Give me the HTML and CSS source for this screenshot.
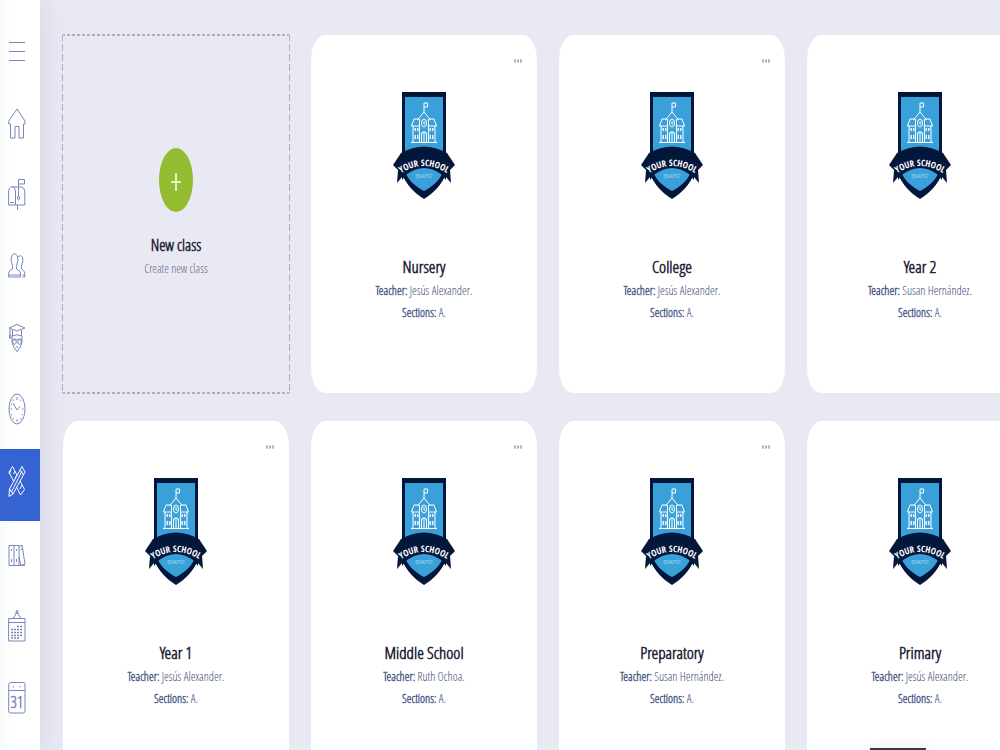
FILE: index.html
```html
<!DOCTYPE html>
<html lang="en">

<head>
  <meta charset="UTF-8">
  <meta name="viewport" content="width=device-width, initial-scale=1.0">
  <title>Classes</title>
  <link rel="stylesheet" href="styles.css">
</head>

<body>
  <svg class="sprite" aria-hidden="true">
    <defs><path id="arc" fill="none" d="M4 84Q31 64 58 84" /></defs>
    <symbol id="logo" viewBox="0 0 62 107">
      <path fill="#03173a" d="M9 0H53V82C49 92 41 101 31 107C21 101 13 92 9 82Z" />
      <path fill="#3aa0da" d="M12 5H50V80C46 89 39 95 31 99C23 95 16 89 12 80Z" />
      <g fill="none" stroke="#fff" stroke-width="1">
        <path d="M31 20V11H34.500V15H31M24.500 28L31 20L37.500 28M26.500 27V50M35.500 27V50M26 27H21L18.500 34H26M36 27H41L43.500 34H36M20 34V50M42 34V50M18 50.500H44M28.500 50V41H33.500V50M31 42V50M29 40H33" />
        <ellipse cx="31" cy="31" rx="2.500" ry="4" />
        <path d="M31 29V32H32" />
      </g>
      <path fill="#eaf6fd" d="M21.500 36H23V39H21.500ZM24 36H25.500V39H24ZM21.500 43H23V47H21.500ZM24 43H25.500V47H24ZM36.500 36H38V39H36.500ZM39 36H40.500V39H39ZM36.500 43H38V47H36.500ZM39 43H40.500V47H39Z" />
      <path fill="#03173a" d="M8 61Q31 48 54 61L62 73L57 78L58 91L53 85V88L48 82Q31 70 14 82L9 88V85L4 91L5 78L0 73Z" />
    </symbol>
  </svg>

  <nav class="sidebar">
    <button type="button" class="nav-item" aria-label="Menu">
      <svg class="icon" viewBox="0 0 18 40"><path d="M1 9.500H17M1 18.500H17M1 27.500H17" /></svg>
    </button>
    <a class="nav-item" href="#home" aria-label="Home">
      <svg class="icon" viewBox="0 0 18 40"><path d="M2.500 19H.8V16L9 4L17 16V19H15.500V33H11V21.500H7V33H2.500Z" /></svg>
    </a>
    <a class="nav-item" href="#mail" aria-label="Mailbox">
      <svg class="icon" viewBox="0 0 18 40"><path d="M10.500 20V2.500H16.500V7H10.500M.6 28V15C.6 8 7.500 8 7.500 15V28M4 10H14Q16.800 11 16.800 15V28H.6M9.500 28V33M2 25.500H6" /><ellipse cx="10.500" cy="21" rx="1" ry="2" /></svg>
    </a>
    <a class="nav-item" href="#users" aria-label="Users">
      <svg class="icon" viewBox="0 0 18 40"><path d="M.6 28V24Q1 21.500 4.500 20Q5 18 4 15Q2.500 11 3.500 7Q6.500 2.500 9.500 7Q10.500 11 9 15Q8 18 8.500 20Q12 21.500 12.500 24V28ZM.6 26H12.500M10 8Q12.500 5 14.500 8Q15.500 12 14 15Q13 17 13.500 20Q16.500 21.500 16.800 24V28H14.500M14.500 26H16.800" /></svg>
    </a>
    <a class="nav-item" href="#students" aria-label="Students">
      <svg class="icon" viewBox="0 0 18 40"><path d="M1 7L9 3.500L17 7L9 10ZM4.500 9V15Q9 12.500 13.500 15V9M2 8V15M1.500 14V17H3V14M4 15V21Q5 27 9 30.500Q13 27 14 21V15M4 19Q6 16.500 9 19Q12 16.500 14 19" /><ellipse cx="6.500" cy="21" rx="1.800" ry="2.300" /><ellipse cx="11.500" cy="21" rx="1.800" ry="2.300" /><path d="M7.500 26H10.500" /></svg>
    </a>
    <a class="nav-item" href="#schedule" aria-label="Schedule">
      <svg class="icon" viewBox="0 0 18 40"><ellipse cx="9" cy="16" rx="8" ry="15" /><path d="M5 10L9 17L12 13.500M9 4V7M9 26V29M2.500 16H4M14 16H15.500M5 6.500V8M13 6.500V8M3.500 11V12M14.500 21V22M3.500 21V22M5 25V26.500M13 25V26.500" /></svg>
    </a>
    <a class="nav-item active" href="#classes" aria-label="Classes">
      <svg class="icon" viewBox="0 0 18 40"><path d="M4.500 1.500L1 7L12.500 30L16.500 24.500ZM3 5L1 9M7 6L5.500 9M9 10L7 13M14 20L12 24" /><path class="front" d="M14 1.500L17 7L5 29L1 31.500L1.500 24ZM12 4.500L15.500 10M14 6L3.500 27M1.500 24L5 29" /></svg>
    </a>
    <a class="nav-item" href="#library" aria-label="Library">
      <svg class="icon" viewBox="0 0 18 40"><path d="M1 8.500H11V28.500H1ZM6 8.500V28.500M11 10L14 8L17 27L13 28.500L11 20M11 28.500H17M3.500 12V14M8.500 12V14M3.500 22V25M8.500 22V25M12.500 13L14 12" /></svg>
    </a>
    <a class="nav-item" href="#attendance" aria-label="Attendance">
      <svg class="icon" viewBox="0 0 18 40"><path d="M.6 9.500H17V32H.6ZM.6 13.500H17M5.500 9L9 3L12.500 9" /><ellipse cx="9" cy="3" rx="1" ry="1.800" /><path stroke-dasharray="2 1" stroke-width="1.300" d="M9 17.500H15M3 20.500H15M3 23.500H15M3 26.500H15M3 29H12" /></svg>
    </a>
    <a class="nav-item" href="#calendar" aria-label="Calendar">
      <svg class="icon" viewBox="0 0 18 40"><rect x=".7" y="1.500" width="16.300" height="30.500" rx="1.800" /><path d="M.7 9.500H17M5.500 5V6.500M12 5V6.500" /><text class="icon-day" x="9" y="27">31</text></svg>
    </a>
  </nav>

  <main class="content">
    <button type="button" class="new-class">
      <span class="plus"><svg viewBox="0 0 10 18"><path d="M5 0V18M0 9H10" /></svg></span>
      <span class="new-title">New class</span>
      <span class="new-text">Create new class</span>
    </button>

    <article class="card">
      <button type="button" class="more" aria-label="Options"><i></i><i></i><i></i></button>
      <svg class="logo" viewBox="0 0 62 107">
        <use href="#logo" />
        <text class="logo-name"><textPath href="#arc" startOffset="50%">YOUR SCHOOL</textPath></text>
        <text class="logo-brand" x="31" y="86">EDUAPPGT</text>
      </svg>
      <h2>Nursery</h2>
      <p><b>Teacher:</b> Jesús Alexander.</p>
      <p><b>Sections:</b> A.</p>
    </article>

    <article class="card">
      <button type="button" class="more" aria-label="Options"><i></i><i></i><i></i></button>
      <svg class="logo" viewBox="0 0 62 107">
        <use href="#logo" />
        <text class="logo-name"><textPath href="#arc" startOffset="50%">YOUR SCHOOL</textPath></text>
        <text class="logo-brand" x="31" y="86">EDUAPPGT</text>
      </svg>
      <h2>College</h2>
      <p><b>Teacher:</b> Jesús Alexander.</p>
      <p><b>Sections:</b> A.</p>
    </article>

    <article class="card">
      <button type="button" class="more" aria-label="Options"><i></i><i></i><i></i></button>
      <svg class="logo" viewBox="0 0 62 107">
        <use href="#logo" />
        <text class="logo-name"><textPath href="#arc" startOffset="50%">YOUR SCHOOL</textPath></text>
        <text class="logo-brand" x="31" y="86">EDUAPPGT</text>
      </svg>
      <h2>Year 2</h2>
      <p><b>Teacher:</b> Susan Hernández.</p>
      <p><b>Sections:</b> A.</p>
    </article>

    <article class="card">
      <button type="button" class="more" aria-label="Options"><i></i><i></i><i></i></button>
      <svg class="logo" viewBox="0 0 62 107">
        <use href="#logo" />
        <text class="logo-name"><textPath href="#arc" startOffset="50%">YOUR SCHOOL</textPath></text>
        <text class="logo-brand" x="31" y="86">EDUAPPGT</text>
      </svg>
      <h2>Year 1</h2>
      <p><b>Teacher:</b> Jesús Alexander.</p>
      <p><b>Sections:</b> A.</p>
    </article>

    <article class="card">
      <button type="button" class="more" aria-label="Options"><i></i><i></i><i></i></button>
      <svg class="logo" viewBox="0 0 62 107">
        <use href="#logo" />
        <text class="logo-name"><textPath href="#arc" startOffset="50%">YOUR SCHOOL</textPath></text>
        <text class="logo-brand" x="31" y="86">EDUAPPGT</text>
      </svg>
      <h2>Middle School</h2>
      <p><b>Teacher:</b> Ruth Ochoa.</p>
      <p><b>Sections:</b> A.</p>
    </article>

    <article class="card">
      <button type="button" class="more" aria-label="Options"><i></i><i></i><i></i></button>
      <svg class="logo" viewBox="0 0 62 107">
        <use href="#logo" />
        <text class="logo-name"><textPath href="#arc" startOffset="50%">YOUR SCHOOL</textPath></text>
        <text class="logo-brand" x="31" y="86">EDUAPPGT</text>
      </svg>
      <h2>Preparatory</h2>
      <p><b>Teacher:</b> Susan Hernández.</p>
      <p><b>Sections:</b> A.</p>
    </article>

    <article class="card">
      <button type="button" class="more" aria-label="Options"><i></i><i></i><i></i></button>
      <svg class="logo" viewBox="0 0 62 107">
        <use href="#logo" />
        <text class="logo-name"><textPath href="#arc" startOffset="50%">YOUR SCHOOL</textPath></text>
        <text class="logo-brand" x="31" y="86">EDUAPPGT</text>
      </svg>
      <h2>Primary</h2>
      <p><b>Teacher:</b> Jesús Alexander.</p>
      <p><b>Sections:</b> A.</p>
    </article>
  </main>

  <div class="chat-tab"></div>
</body>

</html>
```

FILE: styles.css
```css
* {
  box-sizing: border-box;
}

body {
  display: flex;
  height: 100vh;
  margin: 0;
  overflow: hidden;
  background: #e9e9f4;
  color: #25253a;
  font-family: "Open Sans Condensed Light", "Open Sans Condensed", "Open Sans", sans-serif;
}

button {
  padding: 0;
  border: 0;
  background: none;
  color: inherit;
  font: inherit;
  cursor: pointer;
}

.sprite {
  position: absolute;
  width: 0;
  height: 0;
}

/* sidebar */
.sidebar {
  display: flex;
  flex: none;
  flex-direction: column;
  width: 40px;
  padding-top: 17px;
  background: linear-gradient(90deg, #fafcfb, #fff 16px);
  box-shadow: 0 0 28px rgba(90, 90, 150, 0.15);
}

.nav-item {
  display: flex;
  flex: none;
  align-items: center;
  height: 72px;
  padding-left: 8px;
  color: #7a86bb;
}

.nav-item.active {
  background: #3663d2;
  color: #fff;
}

.icon {
  width: 18px;
  height: 40px;
  fill: none;
  stroke: currentColor;
  stroke-width: 1;
}

.front {
  fill: #3663d2;
}

.icon-day {
  fill: currentColor;
  stroke: none;
  font-size: 16px;
  font-weight: bold;
  text-anchor: middle;
}

/* classes */
.content {
  display: grid;
  flex: 1;
  grid-template-columns: repeat(4, minmax(226px, 1fr));
  grid-auto-rows: 358px;
  gap: 28px 22px;
  min-width: 0;
  padding: 35px 23px;
  overflow: hidden;
}

.new-class {
  display: flex;
  flex-direction: column;
  align-items: center;
  margin: -1px;
  padding-top: 114px;
  border-radius: 3px;
  background:
    repeating-linear-gradient(90deg, #aeaecb 0 3px, transparent 3px 5px) top / 100% 2px no-repeat,
    repeating-linear-gradient(90deg, #aeaecb 0 3px, transparent 3px 5px) bottom / 100% 2px no-repeat,
    repeating-linear-gradient(#aeaecb 0 7px, transparent 7px 10px) left / 1px 100% no-repeat,
    repeating-linear-gradient(#aeaecb 0 7px, transparent 7px 10px) right / 1px 100% no-repeat;
}

.plus {
  display: flex;
  align-items: center;
  justify-content: center;
  width: 34px;
  height: 64px;
  margin-bottom: 21px;
  padding-top: 4px;
  border-radius: 50%;
  background: #91bd2e;
}

.plus svg {
  width: 10px;
  height: 18px;
  stroke: #fff;
  stroke-width: 1.5;
}

.new-title {
  font-size: 16px;
  font-weight: bold;
  line-height: 24px;
}

.new-text {
  color: #66667f;
  font-size: 12px;
  line-height: 24px;
}

.card {
  position: relative;
  display: flex;
  flex-direction: column;
  align-items: center;
  padding-top: 57px;
  border-radius: 14px / 26px;
  background: #fff;
}

.more {
  position: absolute;
  top: 20px;
  right: 14px;
  display: flex;
  gap: 1px;
  padding: 4px 1px;
}

.more i {
  width: 2px;
  height: 4px;
  border-radius: 50%;
  background: #a3abc6;
}

.logo {
  width: 62px;
  height: 107px;
  margin-bottom: 54px;
}

.logo-name {
  fill: #fff;
  font-family: "Open Sans Condensed", "Open Sans", sans-serif;
  font-size: 9px;
  font-weight: bold;
  text-anchor: middle;
}

.logo-brand {
  fill: #d8eefa;
  font-size: 5px;
  text-anchor: middle;
}

.card h2 {
  margin: 0;
  font-size: 17px;
  font-weight: bold;
  line-height: 27px;
}

.card p {
  margin: 0;
  color: #3a4a78;
  font-size: 12px;
  line-height: 22px;
}

.card b {
  color: #4a5986;
}

/* top edge of the docked chat tab */
.chat-tab {
  position: fixed;
  bottom: 0;
  left: 87%;
  width: 56px;
  height: 2px;
  background: #3a3a3e;
  box-shadow: 0 0 12px rgba(0, 0, 0, 0.25);
}
```
